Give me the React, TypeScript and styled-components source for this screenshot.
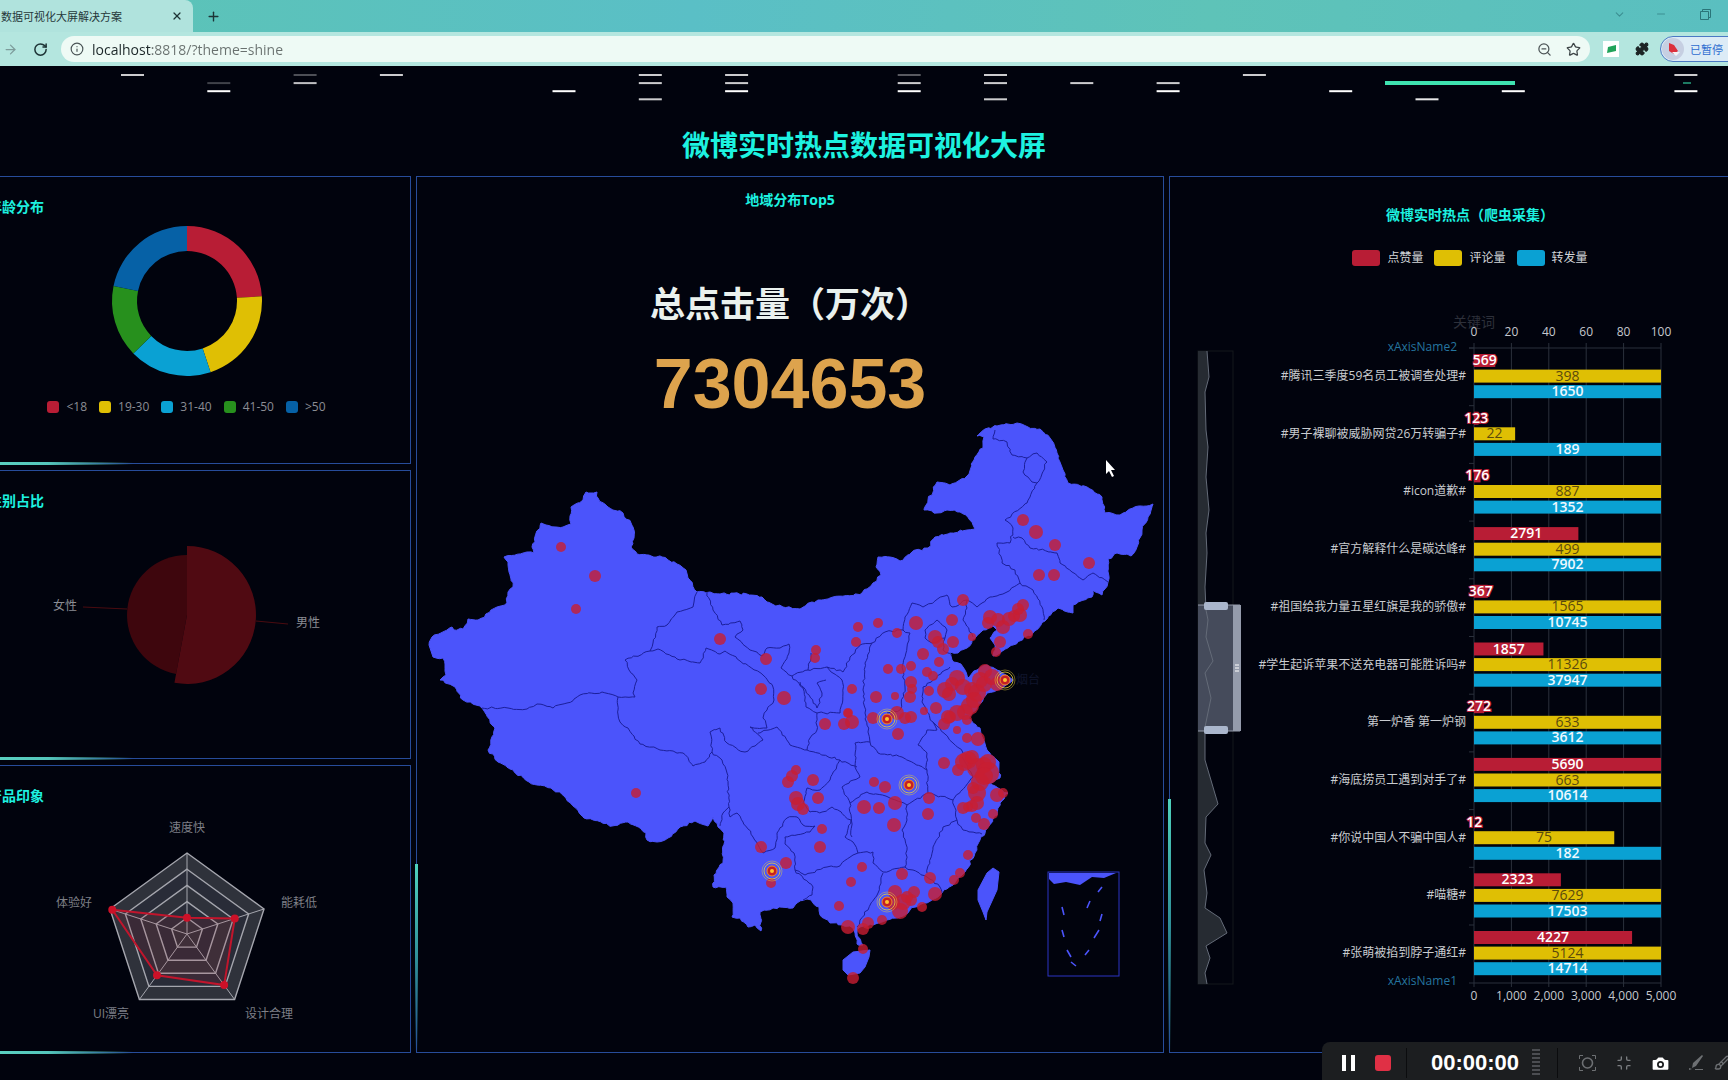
import React from "react";
import styled, { createGlobalStyle } from "styled-components";
import {
  ArrowRight, Camera, ChevronDown, Info, Minimize, Minus, Plus, Puzzle, RotateCw, Star, X, ZoomOut, Brush,
} from "lucide-react";

const C = {
  bg: "#01030d",
  cyan: "#1df2e0",
  line: "#274c9a",
  red: "#b81d35",
  yellow: "#dfbf04",
  blue: "#0aa1d3",
  green: "#27901d",
  navy: "#0661a6",
  map: "#4b54fb",
  border: "#1b1f9a",
};

const FONT = '"Open Sans", "Noto Sans CJK SC", sans-serif';

const Global = createGlobalStyle`
  *, *::before, *::after { box-sizing: border-box; }
  body { margin: 0; background: ${C.bg}; font-family: ${FONT}; overflow: hidden; }
  h1, h2, p, ul { margin: 0; padding: 0; }
  button { border: 0; padding: 0; background: none; font-family: inherit; cursor: pointer; }
  svg { display: block; }
  svg text { font-family: ${FONT}; }
`;

const Screen = styled.div`
  display: flex;
  flex-direction: column;
  min-height: 100vh;
  overflow: hidden;
`;

/* ---------- browser chrome ---------- */

const TabStrip = styled.div`
  display: flex;
  align-items: stretch;
  height: 32px;
  background: linear-gradient(90deg, #5cc4b4, #5abfc6 40%, #5ec3b8 70%, #5abfc0);
`;

const Tab = styled.div`
  display: flex;
  align-items: center;
  justify-content: space-between;
  width: 193px;
  padding: 0 10px 0 1px;
  border-radius: 0 8px 0 0;
  background: #b0e3dd;
  color: #26383a;
  font-size: 11px;
`;

const IconButton = styled.button<{ $w?: number; $color?: string }>`
  display: flex;
  align-items: center;
  justify-content: center;
  flex: none;
  width: ${(p) => p.$w ?? 24}px;
  color: ${(p) => p.$color ?? "#1d3436"};
`;

const WindowControls = styled.div`
  display: flex;
  margin-left: auto;
  padding: 0 0 4px;
`;

const Toolbar = styled.div`
  display: flex;
  align-items: center;
  height: 34px;
  background: #b4e6df;
`;

const AddressBar = styled.label`
  display: flex;
  align-items: center;
  flex: 1;
  height: 26px;
  margin-left: 1px;
  padding: 0 3px 0 9px;
  border-radius: 13px;
  background: #eefaf5;
  color: #4a5456;
`;

const Address = styled.input`
  flex: 1;
  min-width: 0;
  margin-left: 8px;
  padding: 0;
  border: 0;
  outline: 0;
  font-family: ${FONT};
  font-size: 14px;
  color: transparent;
  background: linear-gradient(90deg, #1c2729 60px, #69716f 60px);
  background-clip: text;
  -webkit-background-clip: text;
`;

const Extensions = styled.div`
  display: flex;
  align-items: center;
  gap: 15px;
  padding-left: 13px;
`;

const ExtensionTile = styled.button`
  display: grid;
  place-items: center;
  width: 16px;
  height: 16px;
  background: #fff;
`;

const Profile = styled.button`
  display: flex;
  align-items: center;
  gap: 6px;
  height: 26px;
  width: 84px;
  margin: 0 -16px 0 -5px;
  padding-left: 1px;
  border: 1px solid #4b79c4;
  border-radius: 13px;
  background: #dcebf6;
  color: #2c6bd0;
  font-size: 11px;
`;

/* ---------- dashboard ---------- */

const Header = styled.header`
  display: flex;
  flex-direction: column;
  height: 110px;
`;

const Strip = styled.svg`
  width: 100%;
  height: 44px;
`;

const Title = styled.h1`
  margin-top: 15px;
  color: ${C.cyan};
  font-size: 28px;
  line-height: 40px;
  font-weight: 700;
  text-align: center;
`;

const Board = styled.main`
  display: grid;
  grid-template-columns: 449fr 748fr 594fr;
  gap: 5px;
  flex: 1;
  margin: 0 -35px 27px -38px;
`;

const Column = styled.div`
  display: flex;
  flex-direction: column;
  gap: 6px;
  min-width: 0;
`;

const Panel = styled.section<{ $glow?: string }>`
  position: relative;
  display: flex;
  flex-direction: column;
  flex: 1;
  min-width: 0;
  border: 1px solid ${C.line};
  &::after {
    content: "";
    position: absolute;
    ${(p) =>
      p.$glow
        ? `left: -2px; top: ${p.$glow}; bottom: -1px; width: 3px;
           background: linear-gradient(180deg, #4fd2bd, #2f8f98 50%, transparent);`
        : `left: 0; bottom: -2px; width: 170px; height: 3px;
           background: linear-gradient(90deg, #5fd8c4, #54c6bb 50%, transparent);`}
  }
`;

const PanelTitle = styled.h2<{ $align?: string; $top: number; $left?: number }>`
  padding: ${(p) => p.$top}px 25px 0 ${(p) => p.$left ?? 25}px;
  color: ${C.cyan};
  font-size: 14px;
  line-height: 20px;
  font-weight: 700;
  text-align: ${(p) => p.$align ?? "left"};
`;

const Chart = styled.svg`
  width: 100%;
  height: auto;
`;

const Legend = styled.ul<{ $gap: number; $color: string; $top?: number; $left?: number }>`
  display: flex;
  justify-content: center;
  gap: ${(p) => p.$gap}px;
  margin-top: ${(p) => p.$top ?? 0}px;
  padding-left: ${(p) => p.$left ?? 0}px;
  list-style: none;
  color: ${(p) => p.$color};
  font-size: 12px;
  line-height: 20px;
`;

const LegendItem = styled.li`
  display: flex;
  align-items: center;
  gap: 7px;
`;

const Swatch = styled.span<{ $color: string; $w: number; $h: number }>`
  width: ${(p) => p.$w}px;
  height: ${(p) => p.$h}px;
  border-radius: 3px;
  background: ${(p) => p.$color};
`;

const Headline = styled.p`
  margin-top: 71px;
  color: #eaf1ee;
  font-size: 35px;
  line-height: 46px;
  font-weight: 700;
  text-align: center;
`;

const Total = styled.p`
  margin-top: 22px;
  color: #dda34d;
  font-family: "Liberation Sans", sans-serif;
  font-size: 70px;
  line-height: 70px;
  font-weight: 700;
  text-align: center;
`;

/* ---------- screen recorder ---------- */

const Recorder = styled.div`
  position: fixed;
  right: -12px;
  bottom: 0;
  display: flex;
  align-items: center;
  height: 38px;
  padding: 4px 0 0 16px;
  border-radius: 8px 0 0 0;
  background: #1c1e20;
`;

const Divider = styled.span`
  width: 1px;
  height: 30px;
  background: #0b0c0e;
`;

const Clock = styled.time`
  margin: 0 13px 0 24px;
  color: #fff;
  font-family: "Liberation Sans", sans-serif;
  font-size: 22px;
  line-height: 30px;
  font-weight: 700;
`;

const Meter = styled.span`
  width: 8px;
  height: 28px;
  margin-right: 17px;
  background: repeating-linear-gradient(180deg, #4b4d51 0 2px, transparent 2px 4px);
`;

/* ---------- data ---------- */

type Pt = [number, number];

const MARKS: [number, number, number][] = [
  [0, 0, 0.8], [1, 1, 0.25], [1, 2, 1], [2, 0, 0.3], [2, 1, 0.75], [3, 0, 0.8], [5, 2, 1],
  [6, 0, 0.8], [6, 1, 0.8], [6, 3, 0.8], [7, 0, 0.8], [7, 1, 0.8], [7, 2, 1],
  [9, 0, 0.35], [9, 1, 0.8], [9, 2, 1], [10, 0, 0.8], [10, 1, 0.8], [10, 3, 0.8], [11, 1, 0.8],
  [12, 1, 0.8], [12, 2, 1], [13, 0, 0.8], [14, 2, 1], [15, 3, 0.9], [16, 2, 1], [18, 0, 0.8], [18, 2, 1],
];

const AGES = [
  { name: "<18", color: C.red, to: 86.4 },
  { name: "19-30", color: C.yellow, to: 161.7 },
  { name: "31-40", color: C.blue, to: 225.7 },
  { name: "41-50", color: C.green, to: 281.6 },
  { name: ">50", color: C.navy, to: 360 },
];

const TOPICS: [string, number, number, number][] = [
  ["#腾讯三季度59名员工被调查处理#", 569, 398, 1650],
  ["#男子裸聊被威胁网贷26万转骗子#", 123, 22, 189],
  ["#icon道歉#", 176, 887, 1352],
  ["#官方解释什么是碳达峰#", 2791, 499, 7902],
  ["#祖国给我力量五星红旗是我的骄傲#", 367, 1565, 10745],
  ["#学生起诉苹果不送充电器可能胜诉吗#", 1857, 11326, 37947],
  ["第一炉香 第一炉钢", 272, 633, 3612],
  ["#海底捞员工遇到对手了#", 5690, 663, 10614],
  ["#你说中国人不骗中国人#", 12, 75, 182],
  ["#喵糖#", 2323, 7629, 17503],
  ["#张萌被掐到脖子通红#", 4227, 5124, 14714],
];

const OUTLINE =
  "429,645 432,637 452,627 454,630 463,629 468,619 478,620 497,607 507,603 508,592 513,587 509,572 508,562 504,557 527,552 534,553 532,547 541,523 546,525 563,527 571,524 571,507 583,500 586,492 597,492 598,498 608,507 623,513 633,527 634,538 631,547 637,554 662,557 677,564 686,570 688,578 697,592 710,592 720,594 747,594 762,597 767,602 783,607 800,609 818,600 833,597 862,593 873,583 881,575 876,567 878,557 890,557 900,561 912,552 928,548 935,537 950,533 967,530 975,529 972,522 960,512 947,510 937,513 924,510 928,500 937,482 950,485 967,476 975,457 983,448 984,437 977,436 985,429 997,426 1017,423 1028,427 1040,429 1050,438 1057,453 1063,470 1068,483 1087,487 1102,497 1105,513 1120,515 1133,508 1153,504 1148,517 1142,530 1137,547 1131,556 1117,553 1108,559 1108,582 1102,595 1093,590 1092,597 1073,605 1073,613 1058,608 1045,621 1033,633 1013,645 1000,653 993,656 995,645 990,638 997,630 993,626 983,630 975,638 967,648 958,653 950,652 952,660 963,667 968,678 977,670 987,665 1000,671 1013,680 997,690 987,693 977,708 968,718 980,728 987,750 999,762 1000,778 990,784 1008,793 1000,803 997,815 988,827 980,840 975,853 965,872 953,885 942,893 927,903 910,910 900,917 887,920 873,925 860,927 857,933 863,945 857,944 855,933 853,928 842,925 830,923 820,915 819,907 807,899 797,903 793,908 773,908 760,912 761,931 755,925 748,927 740,918 732,917 733,903 727,897 726,887 713,887 714,875 723,863 724,833 718,827 713,817 708,826 695,821 680,827 668,838 657,842 647,840 646,833 628,822 612,826 584,818 564,796 551,788 529,782 510,769 498,762 488,750 495,728 482,708 463,700 455,687 440,680 446,675 443,658 433,657";

const BORDERS = [
  "697,592 694,602 693,607 677,612 667,625 657,627 653,643 650,651 625,660 629,670 637,680 633,693 635,697 618,697 602,692 580,695 567,703 553,708 537,704 527,709 508,708 482,708",
  "707,592 713,610 722,625 740,621 743,630 735,637 750,650 762,656 767,648 780,648 789,644 789,653 781,668 792,676 808,670 811,653",
  "650,651 658,649 677,659 700,663 706,648 720,654 725,651 740,661 763,675 773,687 774,700 767,710 763,718 767,728 750,727 763,740 745,752 727,743 720,728 710,732 712,752 705,762 693,766 683,753 660,750 640,744 634,736 620,722 618,710 618,697",
  "712,752 722,760 727,773 729,807 730,817 737,813 743,822 753,837 763,853 775,848 777,833 787,818 797,817 803,825 815,826",
  "729,807 723,813 720,826",
  "815,826 810,832 785,837 785,844 794,853 795,870 805,875 827,867 837,867 853,855 858,853 853,842 845,837 851,820 832,807 822,812 810,812 803,803 807,788 820,790 830,780 840,760 807,750",
  "795,870 813,887 812,895 803,900",
  "758,733 777,727 790,745 807,750 810,738 817,730 817,713 840,713 843,693 842,680 827,667",
  "792,676 803,688 806,707 817,713",
  "808,670 827,667 843,672 850,657 860,645 872,643 885,632 903,630 905,617 912,603 923,607 947,595 952,607 967,600 977,607 990,597 1007,592 1020,583 1015,570 1002,563 997,543 1010,543 1013,528 1005,520 1027,503 1030,497 1037,483 1047,462 1037,453 1027,458 1012,455 1007,442 993,439 995,430",
  "1027,458 1023,472 1032,482 1037,483",
  "800,682 817,708 822,693 817,683 826,680",
  "872,643 865,663 863,690 865,713 870,742 855,743 855,767 860,777 842,787 850,803 852,837",
  "870,742 878,753 902,757 927,770 928,793 907,805 888,797 867,792 850,803",
  "840,760 857,767",
  "907,805 907,820 902,830 907,850 905,867 883,872 873,863 873,852 858,853",
  "883,873 878,893 860,920 857,927",
  "905,867 913,870 927,877 940,887 942,893",
  "927,873 933,847 943,827 957,820 953,800 935,795 928,793",
  "953,800 973,777 962,757",
  "957,820 963,830 982,834",
  "927,770 927,753 918,745 927,730 937,730 933,722 953,743 963,753",
  "903,630 910,633 907,647 902,667 905,687 900,710 887,713",
  "933,722 922,702 923,687 950,667",
  "925,630 937,620 947,630 945,638 932,643 925,638 925,630",
  "945,638 943,650 952,655",
  "967,600 967,608 963,620 973,637",
  "1020,583 1033,590 1042,607 1044,620",
  "1013,537 1022,538 1030,548 1057,553 1060,563 1072,572 1083,580 1093,573 1108,582",
];

const ISLANDS = [
  "853,952 870,950 869,957 865,967 860,973 848,975 843,970 843,960",
  "993,868 999,872 997,890 987,912 986,920 983,912 978,900 978,890 987,873",
];

const CITIES =
  "561,547,5 595,576,6 576,609,5 720,639,6 766,659,6 761,689,6 784,698,7 816,650,5 815,658,5 636,793,5 1023,520,6 1036,532,7 1055,545,6 1089,563,6 1039,575,6 1054,575,6 963,600,6 916,623,7 952,620,6 878,623,5 858,627,5 897,633,5 856,642,5 935,637,7 938,642,6 953,642,6 972,637,4 943,649,6 923,654,6 939,662,5 888,669,5 901,669,5 911,666,5 927,672,5 933,676,5 911,682,6 912,689,5 910,697,6 929,691,5 895,696,4 876,697,6 852,689,5 848,713,5 936,708,6 924,711,4 990,617,7 988,623,6 998,620,7 1003,627,7 1009,619,7 1020,615,7 1014,616,6 1023,605,6 1018,609,6 1028,634,5 1000,642,6 996,652,5 957,678,8 952,684,7 945,690,8 949,694,7 963,687,8 972,690,8 985,671,7 980,680,8 977,693,9 984,684,8 992,677,8 997,684,7 970,706,9 965,712,8 974,700,8 957,713,8 948,717,7 825,724,6 848,713,4 852,722,7 844,724,6 873,718,6 897,713,7 905,718,6 911,717,6 898,734,6 944,724,6 957,730,4 967,720,5 950,717,6 967,738,5 978,739,7 944,763,6 968,760,9 964,762,9 977,768,10 972,757,7 984,765,8 988,762,8 988,773,11 958,770,6 980,782,9 984,776,9 977,793,9 973,788,6 977,803,7 972,806,6 997,795,7 1003,793,5 968,807,5 963,808,6 976,818,5 984,824,6 993,814,5 968,855,5 960,873,5 954,880,5 929,798,6 928,814,6 874,782,5 885,787,6 895,803,7 879,808,6 864,807,7 894,825,7 796,770,5 788,782,6 792,776,6 813,780,6 818,798,6 796,798,7 798,804,7 803,809,6 822,829,5 820,847,6 761,847,6 786,863,6 771,883,5 862,867,5 851,882,5 839,906,5 848,927,7 902,874,6 930,878,6 935,894,7 922,907,5 914,892,6 911,900,6 895,892,7 903,902,8 900,911,8 893,903,7 907,897,6 882,920,5 868,923,6 863,929,6 863,949,5 853,978,6";

const TOP_CITIES: Pt[] = [[1005, 680], [887, 719], [909, 785], [772, 871], [887, 902]];

const ZOOM_PROFILE =
  "1207,351 1209,377 1205,392 1206,430 1208,447 1206,477 1209,510 1206,533 1207,553 1205,587 1206,610 1208,620 1206,637 1213,661 1205,673 1211,698 1205,727 1205,760 1218,804 1206,817 1205,843 1211,855 1204,870 1207,893 1205,908 1220,918 1227,933 1206,946 1210,958 1205,973 1207,984";

/* ---------- helpers ---------- */

const parse = (s: string): Pt[] => s.split(" ").map((p) => p.split(",").map(Number) as Pt);

/** Breaks every segment into short jittered steps so that the line reads as a coast or a border. */
function roughen(points: Pt[], amount: number): string {
  let seed = 7;
  const rand = () => {
    seed = (seed * 16807) % 2147483647;
    return seed / 2147483647 - 0.5;
  };
  const out: string[] = [];
  points.forEach(([x, y], i) => {
    out.push(`${x},${y}`);
    const next = points[i + 1];
    if (!next) return;
    const steps = Math.floor(Math.hypot(next[0] - x, next[1] - y) / 3);
    for (let s = 1; s < steps; s++) {
      const t = s / steps;
      const px = x + (next[0] - x) * t + rand() * amount;
      const py = y + (next[1] - y) * t + rand() * amount;
      out.push(`${px.toFixed(1)},${py.toFixed(1)}`);
    }
  });
  return out.join(" ");
}

const polar = (cx: number, cy: number, r: number, deg: number): Pt => {
  const a = ((deg - 90) * Math.PI) / 180;
  return [cx + r * Math.cos(a), cy + r * Math.sin(a)];
};

function arc(cx: number, cy: number, r0: number, r1: number, from: number, to: number) {
  const big = to - from > 180 ? 1 : 0;
  const [a, b, c, d] = [polar(cx, cy, r1, from), polar(cx, cy, r1, to), polar(cx, cy, r0, to), polar(cx, cy, r0, from)];
  return `M${a} A${r1} ${r1} 0 ${big} 1 ${b} L${c} A${r0} ${r0} 0 ${big} 0 ${d} Z`;
}

/* ---------- parts ---------- */

function BrowserChrome() {
  return (
    <>
      <TabStrip>
        <Tab>
          <span>数据可视化大屏解决方案</span>
          <IconButton $w={12} aria-label="关闭标签页"><X size={12} strokeWidth={2.5} /></IconButton>
        </Tab>
        <IconButton $w={40} aria-label="新标签页"><Plus size={15} strokeWidth={2.2} /></IconButton>
        <WindowControls>
          <IconButton $w={42} $color="#3c8f92" aria-label="搜索标签页"><ChevronDown size={13} /></IconButton>
          <IconButton $w={42} $color="#3c8f92" aria-label="最小化"><Minus size={12} /></IconButton>
          <IconButton $w={46} $color="#2a7579" aria-label="还原">
            <svg width="11" height="11" viewBox="0 0 11 11" fill="none" stroke="currentColor">
              <path d="M0.5 2.5 H8.5 V10.5 H0.5 Z M2.5 2.5 V0.5 H10.5 V8.5 H8.5" />
            </svg>
          </IconButton>
        </WindowControls>
      </TabStrip>
      <Toolbar>
        <IconButton $w={20} $color="#7d9c9b" aria-label="前进"><ArrowRight size={15} /></IconButton>
        <IconButton $w={40} aria-label="重新加载"><RotateCw size={15} strokeWidth={2.4} /></IconButton>
        <AddressBar>
          <Info size={14} />
          <Address aria-label="地址" defaultValue="localhost:8818/?theme=shine" />
          <IconButton $w={30} $color="#4d5557" aria-label="缩放"><ZoomOut size={15} /></IconButton>
          <IconButton $w={28} $color="#3d4547" aria-label="收藏"><Star size={15} /></IconButton>
        </AddressBar>
        <Extensions>
          <ExtensionTile aria-label="扩展">
            <svg width="9" height="8" viewBox="0 0 9 8"><path d="M1 2 L9 0 V6 L0 8 Z" fill="#21a35a" /></svg>
          </ExtensionTile>
          <IconButton $w={16} $color="#1c2425" aria-label="扩展程序"><Puzzle size={14} fill="currentColor" /></IconButton>
          <Profile>
            <svg width="22" height="22" viewBox="0 0 22 22">
              <circle cx="11" cy="11" r="11" fill="#c6cfe2" />
              <path d="M7 5 L12 7 L16 13 L12 16 L7 13 Z" fill="#dc2f3c" />
              <path d="M10 14 L18 14 L14 18 Z" fill="#f3f1f5" />
            </svg>
            已暂停
          </Profile>
        </Extensions>
      </Toolbar>
    </>
  );
}

function Decoration() {
  return (
    <Strip viewBox="0 66 1728 44" aria-hidden="true">
      {MARKS.map(([c, r, o]) => (
        <rect key={`${c}-${r}`} x={121 + c * 86.3} y={74 + r * 8.1} width="23" height="2" fill="#fff" opacity={o} />
      ))}
      <rect x="1385" y="81" width="130" height="4" fill="#3fe3b0" />
      <rect x="1683" y="82" width="8" height="2" fill="#1d7a62" />
    </Strip>
  );
}

function AgePanel() {
  return (
    <Panel>
      <PanelTitle $top={20}>年龄分布</PanelTitle>
      <Chart viewBox="-37 217 447 180" role="img" aria-label="年龄分布">
        {AGES.map((a, i) => (
          <path key={a.name} d={arc(187, 301, 50, 75, i ? AGES[i - 1].to : 0, a.to)} fill={a.color} />
        ))}
      </Chart>
      <Legend $gap={12} $color="#8b8d94">
        {AGES.map((a) => (
          <LegendItem key={a.name}><Swatch $color={a.color} $w={12} $h={12} />{a.name}</LegendItem>
        ))}
      </Legend>
    </Panel>
  );
}

function GenderPanel() {
  return (
    <Panel>
      <PanelTitle $top={20}>性别占比</PanelTitle>
      <Chart viewBox="-37 511 447 244" role="img" aria-label="性别占比" fontSize="12" fill="#8b8d94">
        <path d={arc(187, 615, 0, 60, 190.5, 360)} fill="#3e060d" />
        <path d={arc(187, 615, 0, 69, 0, 190.5)} fill="#500a12" />
        <path d="M127 609 L83 607 M256 621 L288 624" stroke="#4a0b10" fill="none" />
        <text x="77" y="610" textAnchor="end">女性</text>
        <text x="296" y="627">男性</text>
      </Chart>
    </Panel>
  );
}

function RadarPanel() {
  const cx = 187, cy = 934, R = 81;
  const ring = (k: number) => [0, 72, 144, 216, 288].map((a) => polar(cx, cy, R * k, a).join()).join(" ");
  const values = [0.2, 0.62, 0.78, 0.63, 0.97].map((v, i) => polar(cx, cy, R * v, i * 72));
  return (
    <Panel>
      <PanelTitle $top={20}>产品印象</PanelTitle>
      <Chart viewBox="-37 806 447 244" role="img" aria-label="产品印象" fontSize="12" fill="#7d7f86">
        {[1, 0.8, 0.6, 0.4, 0.2].map((k, i) => (
          <polygon key={k} points={ring(k)} fill={i % 2 ? "#292c38" : "#2f323b"} stroke="#a5a6ae" strokeWidth="1.4" />
        ))}
        {[0, 72, 144, 216, 288].map((a) => {
          const [x, y] = polar(cx, cy, R, a);
          return <line key={a} x1={cx} y1={cy} x2={x} y2={y} stroke="#a5a6ae" />;
        })}
        <polygon points={values.map((v) => v.join()).join(" ")} fill="#b81d35" fillOpacity="0.12" stroke="#c1152c" strokeWidth="2" />
        {values.map(([x, y]) => <circle key={x} cx={x} cy={y} r="4" fill="#cc1128" />)}
        <text x="187" y="832" textAnchor="middle">速度快</text>
        <text x="281" y="907">能耗低</text>
        <text x="245" y="1018">设计合理</text>
        <text x="129" y="1018" textAnchor="end">UI漂亮</text>
        <text x="92" y="907" textAnchor="end">体验好</text>
      </Chart>
    </Panel>
  );
}

function MapPanel() {
  return (
    <Panel $glow="687px">
      <PanelTitle $top={13} $align="center">地域分布Top5</PanelTitle>
      <Headline>总点击量（万次）</Headline>
      <Total>7304653</Total>
      <Chart viewBox="417 419 746 630" role="img" aria-label="中国地图">
        <polygon points={roughen(parse(OUTLINE), 2.4)} fill={C.map} stroke={C.map} />
        {ISLANDS.map((s) => <polygon key={s} points={s} fill={C.map} stroke={C.map} strokeLinejoin="round" />)}
        {BORDERS.map((s) => (
          <polyline key={s} points={roughen(parse(s), 2.2)} fill="none" stroke={C.border} />
        ))}
        <rect x="1048" y="872" width="71" height="104" fill="none" stroke="#2c35c4" />
        <path d="M1049 873 H1116 L1104 878 L1092 877 L1080 885 L1066 882 L1054 884 L1049 879 Z" fill={C.map} />
        <path
          d="M1098 892 l4 -5 M1087 908 l3 -7 M1062 907 l2 8 M1062 930 l2 7 M1067 950 l4 7 M1071 962 l5 4 M1085 955 l4 -5 M1094 938 l5 -8 M1100 921 l2 -7"
          stroke={C.map} strokeWidth="1.6"
        />
        {CITIES.split(" ").map((c, i) => {
          const [x, y, r] = c.split(",");
          return <circle key={i} cx={x} cy={y} r={r} fill="#c81e32" fillOpacity="0.8" />;
        })}
        {TOP_CITIES.map(([x, y]) => (
          <g key={`${x}-${y}`} fill="none" stroke="#e6cf3c">
            <circle cx={x} cy={y} r="5" fill="#c41f25" stroke="#f08a28" />
            <circle cx={x} cy={y} r="2" fill="#ffc22e" stroke="none" />
            <circle cx={x} cy={y} r="8" strokeOpacity="0.8" />
            <circle cx={x} cy={y} r="10" strokeOpacity="0.45" />
          </g>
        ))}
        <text x="1016" y="684" fontSize="12" fill="#10152c">烟台</text>
        <path d="M1106 460 V474 L1109 471 L1112 477 L1114 476 L1111 470 H1115 Z" fill="#fff" />
      </Chart>
    </Panel>
  );
}

function TopicPanel() {
  const x0 = 1474, w = 187, top = 348, step = 57.7;
  const series = [
    { color: C.red, text: "#fff", max: 5000 },
    { color: C.yellow, text: "#5b4a0c", max: 100 },
    { color: C.blue, text: "#eef8ff", max: 100 },
  ];
  const ticks = [0, 1, 2, 3, 4, 5];
  return (
    <Panel $glow="622px">
      <PanelTitle $top={28} $left={33} $align="center">微博实时热点（爬虫采集）</PanelTitle>
      <Legend $gap={11} $color="#d3d6da" $top={23} $left={8}>
        <LegendItem><Swatch $color={C.red} $w={28} $h={16} />点赞量</LegendItem>
        <LegendItem><Swatch $color={C.yellow} $w={28} $h={16} />评论量</LegendItem>
        <LegendItem><Swatch $color={C.blue} $w={28} $h={16} />转发量</LegendItem>
      </Legend>
      <Chart viewBox="1170 268 592 760" role="img" aria-label="微博实时热点" fontSize="12">
        <text x={x0} y="327" fontSize="14" textAnchor="middle" fill="#2d303a">关键词</text>
        {ticks.map((t) => {
          const x = x0 + (w / 5) * t;
          return (
            <g key={t} fill="#c5c8ce" textAnchor="middle">
              <line x1={x} x2={x} y1="343" y2="987" stroke="#2b313c" />
              <text x={x} y="336">{t * 20}</text>
              <text x={x} y="1000">{(t * 1000).toLocaleString("en-US")}</text>
            </g>
          );
        })}
        <path d={`M1469 348 H${x0 + w} M1469 983 H${x0 + w}`} stroke="#2b313c" />
        <text x="1457" y="351" textAnchor="end" fill="#25759f">xAxisName2</text>
        <text x="1457" y="985" textAnchor="end" fill="#25759f">xAxisName1</text>
        {TOPICS.map(([name, ...values], i) => (
          <g key={name}>
            <text x="1466" y={top + step * i + 32} textAnchor="end" fill="#c9ccd0">{name}</text>
            <line x1="1469" x2={x0} y1={top + step * i} y2={top + step * i} stroke="#2b313c" />
            {values.map((v, k) => {
              const s = series[k];
              const width = Math.min(v / s.max, 1) * w;
              const y = top + step * i + 6 + k * 15.6;
              return (
                <g key={k}>
                  <rect x={x0} y={y} width={width} height="13" fill={s.color} />
                  <text
                    x={x0 + width / 2} y={y + 11} fontSize="14" textAnchor="middle" fill={s.text}
                    fontWeight={k === 1 ? 400 : 600} stroke={k === 1 ? "none" : s.color} strokeWidth="2" paintOrder="stroke"
                  >
                    {v}
                  </text>
                </g>
              );
            })}
          </g>
        ))}
        <rect x="1198" y="351" width="35" height="633" fill="none" stroke="#14191d" />
        <polygon points={`1198,351 ${ZOOM_PROFILE} 1198,984`} fill="#262b32" />
        <rect x="1198" y="605" width="35" height="126" fill="#454b5b" />
        <polyline points={ZOOM_PROFILE} fill="none" stroke="#646b78" />
        <rect x="1233" y="605" width="8" height="126" fill="#949bab" />
        <path d="M1198 605 H1240 M1198 731 H1240" stroke="#949bab" />
        <path d="M1235 665 h4 M1235 668 h4 M1235 671 h4" stroke="#fff" />
        <rect x="1204" y="602" width="24" height="8" rx="2" fill="#aab6cc" />
        <rect x="1204" y="726" width="24" height="8" rx="2" fill="#aab6cc" />
      </Chart>
    </Panel>
  );
}

function RecorderBar() {
  return (
    <Recorder>
      <IconButton $w={22} aria-label="暂停">
        <svg width="14" height="16" viewBox="0 0 14 16"><path d="M0 0h4v16H0zM9 0h4v16H9z" fill="#fff" /></svg>
      </IconButton>
      <IconButton $w={46} aria-label="停止">
        <svg width="16" height="16"><rect width="16" height="16" rx="3" fill="#e03045" /></svg>
      </IconButton>
      <Divider />
      <Clock>00:00:00</Clock>
      <Meter />
      <Divider />
      <IconButton $w={58} $color="#6d7073" aria-label="区域">
        <svg width="17" height="16" viewBox="0 0 17 16" fill="none" stroke="currentColor">
          <circle cx="8.5" cy="8" r="5" strokeWidth="1.6" />
          <path d="M0.5 4 V0.5 H4 M13 0.5 H16.5 V4 M16.5 12 V15.5 H13 M4 15.5 H0.5 V12" />
        </svg>
      </IconButton>
      <IconButton $w={16} $color="#7b7e81" aria-label="缩小"><Minimize size={18} /></IconButton>
      <IconButton $w={56} $color="#1c1e20" aria-label="截图"><Camera size={21} fill="#fff" /></IconButton>
      <IconButton $w={16} $color="#6d7073" aria-label="画笔">
        <svg width="16" height="16" viewBox="0 0 16 16" fill="currentColor">
          <path d="M14 0 L15 1 L8 11 L4 13 L5 8 Z M1 13 L4 14 L1 15 Z M7 14 H15 V15 H7 Z" />
        </svg>
      </IconButton>
      <IconButton $w={36} $color="#6d7073" aria-label="工具"><Brush size={16} /></IconButton>
    </Recorder>
  );
}

export default function App() {
  return (
    <Screen>
      <Global />
      <BrowserChrome />
      <Header>
        <Decoration />
        <Title>微博实时热点数据可视化大屏</Title>
      </Header>
      <Board>
        <Column>
          <AgePanel />
          <GenderPanel />
          <RadarPanel />
        </Column>
        <Column><MapPanel /></Column>
        <Column><TopicPanel /></Column>
      </Board>
      <RecorderBar />
    </Screen>
  );
}
